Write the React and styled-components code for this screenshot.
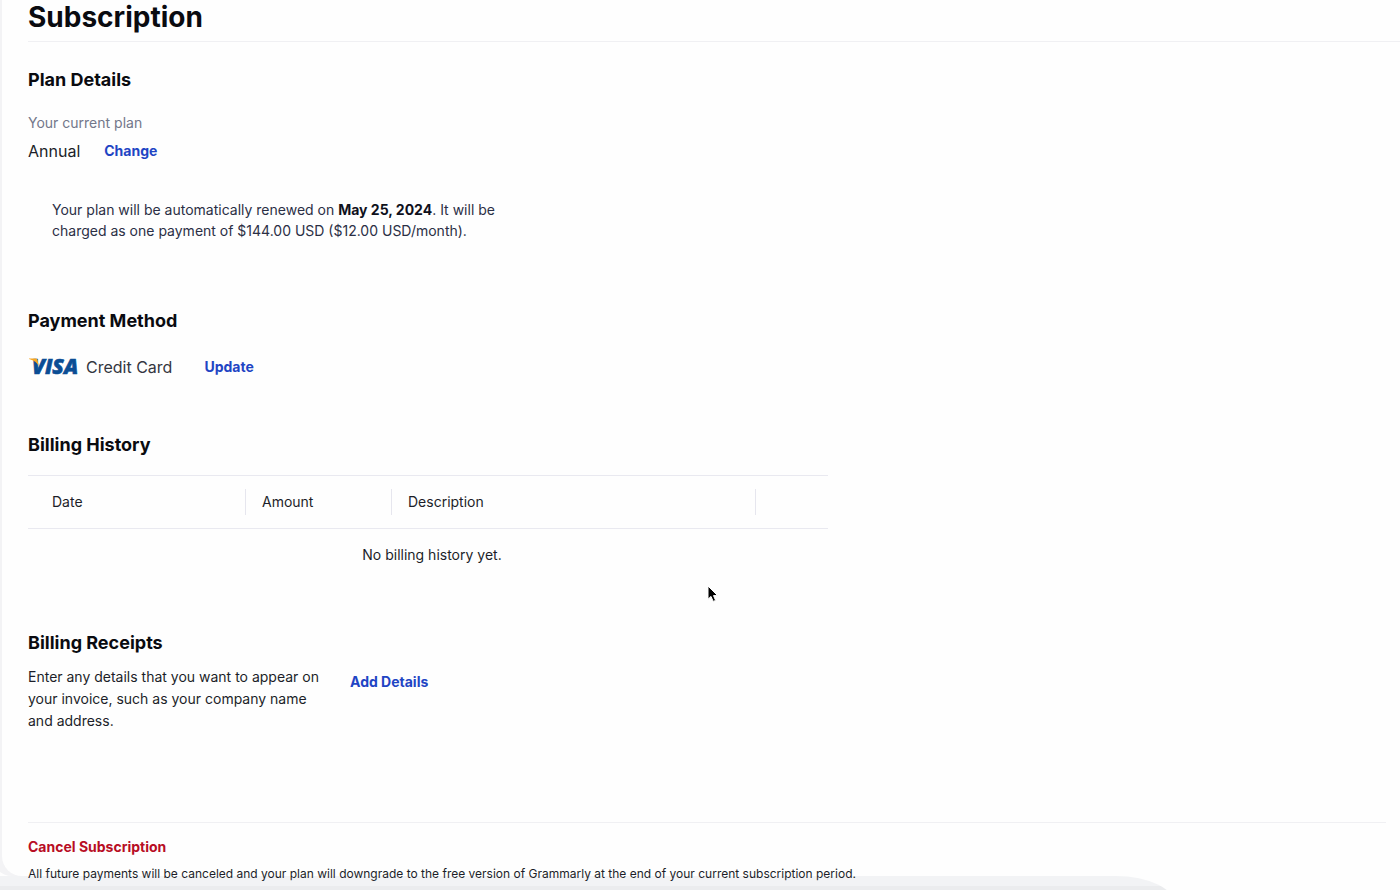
import styled, { createGlobalStyle } from 'styled-components';

const columns = [
  { label: 'Date', width: 217 },
  { label: 'Amount', width: 146 },
  { label: 'Description', width: 364 },
  { label: '', width: 73 },
];

const VisaLogo = () => (
  <VisaSvg viewBox='0 0 50 18' role='img' aria-label='Visa'>
    <text x='4' y='16'>
      VISA
    </text>
    <path d='M1 0.5H7.2C8.6 0.5 9.3 1 9.5 2L10.8 8.2C9.2 4.8 6.2 2.2 1 1Z' fill='#f5a623' />
  </VisaSvg>
);

const Cursor = () => (
  <CursorSvg viewBox='0 0 14 20' aria-hidden='true'>
    <path
      d='M2 2V15.2L5 12.4L7.2 17.4L9.6 16.4L7.5 11.6H11.6Z'
      fill='#000'
      stroke='#fff'
      strokeWidth='1'
    />
  </CursorSvg>
);

const App = () => {
  return (
    <Page>
      <GlobalStyle />
      <Shade />
      <Content>
        <Title>Subscription</Title>

        <Section $space='42px'>
          <Heading>Plan Details</Heading>
          <Caption>Your current plan</Caption>
          <Row $gap='24px'>
            <PlanName>Annual</PlanName>
            <LinkButton type='button'>Change</LinkButton>
          </Row>
          <Renewal>
            Your plan will be automatically renewed on <b>May 25, 2024</b>. It will be charged as
            one payment of $144.00 USD ($12.00 USD/month).
          </Renewal>
        </Section>

        <Section $space='29px'>
          <Heading>Payment Method</Heading>
          <PaymentRow $gap='32px'>
            <Card>
              <VisaLogo />
              Credit Card
            </Card>
            <LinkButton type='button'>Update</LinkButton>
          </PaymentRow>
        </Section>

        <Section $space='39px'>
          <Heading>Billing History</Heading>
          <Table>
            <colgroup>
              {columns.map(({ label, width }) => (
                <col key={label} width={width} />
              ))}
            </colgroup>
            <thead>
              <tr>
                {columns.map(({ label }) => (
                  <HeadCell key={label}>
                    <span>{label}</span>
                  </HeadCell>
                ))}
              </tr>
            </thead>
            <tbody>
              <tr>
                <EmptyCell colSpan={4}>No billing history yet.</EmptyCell>
              </tr>
            </tbody>
          </Table>
        </Section>

        <Section $space='90px'>
          <Heading>Billing Receipts</Heading>
          <Receipts>
            <p>
              Enter any details that you want to appear on your invoice, such as your company name
              and address.
            </p>
            <LinkButton type='button'>Add Details</LinkButton>
          </Receipts>
        </Section>

        <Footer>
          <LinkButton type='button' $color='#b80d24'>
            Cancel Subscription
          </LinkButton>
          <p>
            All future payments will be canceled and your plan will downgrade to the free version
            of Grammarly at the end of your current subscription period.
          </p>
        </Footer>
      </Content>
      <Cursor />
    </Page>
  );
};

const GlobalStyle = createGlobalStyle`
  * {
    box-sizing: border-box;
  }
  body {
    margin: 0;
    background: #fefefe;
    color: #1c1e29;
    font-family: Inter, sans-serif;
    font-size: 14px;
    line-height: 22px;
  }
  h1, h2, p {
    margin: 0;
  }
`;

const Page = styled.div`
  position: relative;
  min-height: 100vh;
  overflow: hidden;
`;

/* soft window edge behind the page: left side and bottom */
const Shade = styled.div`
  position: absolute;
  inset: 0;
  overflow: hidden;

  &::before {
    content: '';
    position: absolute;
    left: 0;
    bottom: -16px;
    width: 84%;
    height: 30px;
    border-top-right-radius: 60px 30px;
    background: linear-gradient(#f2f3f5 10px, #ebecee 10px);
  }
  &::after {
    content: '';
    position: absolute;
    inset: 0 0 14px 2px;
    border-bottom-left-radius: 20px;
    background: #fefefe;
    box-shadow: -10px 0 0 #f3f3f5;
  }
`;

const Content = styled.main`
  position: relative;
  padding-left: 28px;
`;

const Title = styled.h1`
  height: 42px;
  border-bottom: 1px solid #f0f0f3;
  color: #0a0b10;
  font-size: 28px;
  font-weight: 700;
  line-height: 34px;
`;

const Section = styled.section`
  margin-bottom: ${(props) => props.$space};
`;

const Heading = styled.h2`
  padding-top: 26px;
  color: #0a0b10;
  font-size: 18px;
  font-weight: 700;
  line-height: 24px;
`;

const Caption = styled.p`
  margin-top: 20px;
  color: #73778a;
`;

const Row = styled.div`
  display: flex;
  align-items: center;
  gap: ${(props) => props.$gap};
  margin-top: 6px;
`;

const PaymentRow = styled(Row)`
  margin-top: 23px;
`;

const PlanName = styled.span`
  font-size: 16px;
`;

const LinkButton = styled.button`
  padding: 0;
  border: 0;
  background: none;
  color: ${(props) => props.$color || '#1f45c4'};
  font: inherit;
  font-size: 14px;
  font-weight: 700;
  cursor: pointer;
`;

const Renewal = styled.p`
  max-width: 500px;
  margin-top: 37px;
  padding: 0 24px;
  color: #2b2f45;
  line-height: 21px;

  b {
    color: #0f111c;
    font-weight: 700;
  }
`;

const Card = styled.div`
  display: flex;
  align-items: center;
  gap: 8px;
  font-size: 16px;
  color: #34363f;
`;

const VisaSvg = styled.svg`
  width: 50px;
  height: 18px;

  text {
    fill: #0b4d94;
    stroke: #0b4d94;
    stroke-width: 0.6px;
    font-family: 'Open Sans', sans-serif;
    font-size: 21px;
    font-style: italic;
    font-weight: 800;
  }
`;

const Table = styled.table`
  width: 100%;
  max-width: 800px;
  margin-top: 18px;
  border-collapse: collapse;
  table-layout: fixed;
`;

const HeadCell = styled.th`
  padding: 13px 0;
  border-top: 1px solid #e9e9f0;
  border-bottom: 1px solid #e9e9f0;
  font-weight: 400;
  text-align: left;

  span {
    display: block;
    height: 26px;
    padding-left: 16px;
    border-left: 1px solid #e6e6ee;
    line-height: 26px;
  }
  &:first-child span {
    padding-left: 24px;
    border-left: 0;
  }
`;

const EmptyCell = styled.td`
  padding: 15px 0 0 8px;
  text-align: center;
`;

const Receipts = styled.div`
  display: flex;
  align-items: flex-start;
  gap: 22px;
  margin-top: 11px;

  p {
    width: 300px;
  }
  button {
    margin-top: 5px;
  }
`;

const Footer = styled.footer`
  margin-right: 14px;
  padding-top: 13px;
  border-top: 1px solid #f0f0f3;

  p {
    margin-top: 5px;
    font-size: 12px;
  }
`;

const CursorSvg = styled.svg`
  position: absolute;
  top: 584px;
  left: 706px;
  width: 14px;
  height: 20px;
`;

export default App;
